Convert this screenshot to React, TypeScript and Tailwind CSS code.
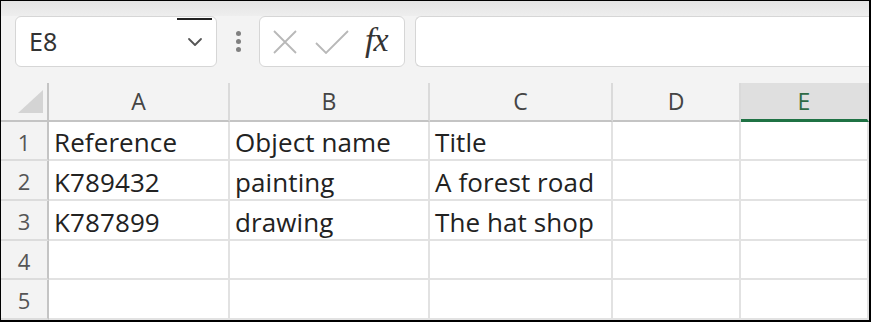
import { ChevronDown } from 'lucide-react';

const cols = ['A', 'B', 'C', 'D', 'E'];

const rows: string[][] = [
  ['Reference', 'Object name', 'Title', '', ''],
  ['K789432', 'painting', 'A forest road', '', ''],
  ['K787899', 'drawing', 'The hat shop', '', ''],
  ['', '', '', '', ''],
  ['', '', '', '', ''],
];

const rowHeights = ['h-[39px]', 'h-[40px]', 'h-[40px]', 'h-[39px]', 'h-[40px]'];

const gridCols = 'grid grid-cols-[48px_181px_200px_183px_128px_128px]';

export default function App() {
  return (
    <div className="w-[871px] h-[322px] bg-[#f3f3f3] border-l border-t border-r-2 border-b-2 border-black flex flex-col overflow-hidden font-['Open_Sans',sans-serif]">
      {/* top strip */}
      <div className="h-[15px] flex-shrink-0 bg-gradient-to-b from-[#e4e4e4] to-[#eeeeee]" />

      {/* formula toolbar */}
      <div className="h-[51px] flex-shrink-0 flex items-stretch pl-[14px]">
        <div className="relative w-[202px] rounded-md border border-[#d6d6d6] bg-white flex items-center justify-between pl-[13px] pr-[9px]">
          <div className="absolute top-[1px] right-[4px] w-[35px] h-[2px] bg-[#222]" />
          <span className="text-[25px] leading-none text-[#333] font-['Noto_Sans',sans-serif]">E8</span>
          <ChevronDown className="w-[24px] h-[24px] text-[#555]" strokeWidth={1.8} />
        </div>
        <div className="w-[42px] flex flex-col items-center justify-center gap-[3px]">
          <span className="w-[5px] h-[5px] rounded-full bg-[#808080]" />
          <span className="w-[5px] h-[5px] rounded-full bg-[#808080]" />
          <span className="w-[5px] h-[5px] rounded-full bg-[#808080]" />
        </div>
        <div className="w-[146px] rounded-md border border-[#d6d6d6] bg-white flex items-center pl-[12px]">
          <svg viewBox="0 0 26 24" className="w-[26px] h-[24px]" fill="none" stroke="#b8b8b8" strokeWidth="1.8">
            <path d="M2 1 L24 23 M24 1 L2 23" />
          </svg>
          <svg viewBox="0 0 34 24" className="w-[34px] h-[24px] ml-[17px]" fill="none" stroke="#b8b8b8" strokeWidth="1.8">
            <path d="M1 13 L11 23 L33 1" />
          </svg>
          <span className="ml-[16px] text-[34px] leading-none italic text-[#333] font-['Liberation_Serif',serif] -mt-[4px] tracking-[-1px]">
            fx
          </span>
        </div>
        <div className="flex-1 ml-[10px] rounded-l-md border border-r-0 border-[#d6d6d6] bg-white" />
      </div>

      <div className="h-[16px] flex-shrink-0" />

      {/* column headers */}
      <div className={`${gridCols} h-[39px] flex-shrink-0`}>
        <div className="relative border-r-2 border-b-2 border-r-[#c4c4c4] border-b-[#c4c4c4]">
          <svg viewBox="0 0 25 23" className="absolute left-[17px] top-[7px] w-[25px] h-[23px]">
            <polygon points="25,0 25,23 0,23" fill="#d4d4d4" />
          </svg>
        </div>
        {cols.map((c) => {
          const sel = c === 'E';
          return (
            <div
              key={c}
              className={`flex items-center justify-center text-[23px] border-r-2 border-r-[#dadada] ${
                sel
                  ? 'bg-[#dfdfdf] text-[#2e6b46] border-b-[3px] border-b-[#1f7244]'
                  : 'text-[#444] border-b-2 border-b-[#c4c4c4]'
              }`}
            >
              {c}
            </div>
          );
        })}
      </div>

      {/* rows */}
      {rows.map((r, i) => (
        <div key={i} className={`${gridCols} ${rowHeights[i]} flex-shrink-0`}>
          <div className="flex items-center justify-center pt-[3px] text-[22px] text-[#555] border-r-2 border-r-[#c4c4c4] border-b-2 border-b-[#dcdcdc]">
            {i + 1}
          </div>
          {r.map((v, j) => (
            <div
              key={j}
              className="bg-white flex items-center pl-[5px] pt-[4px] text-[26px] tracking-[0.1px] text-[#222] whitespace-nowrap overflow-hidden border-r-2 border-b-2 border-[#e2e2e2]"
            >
              {v}
            </div>
          ))}
        </div>
      ))}
    </div>
  );
}
